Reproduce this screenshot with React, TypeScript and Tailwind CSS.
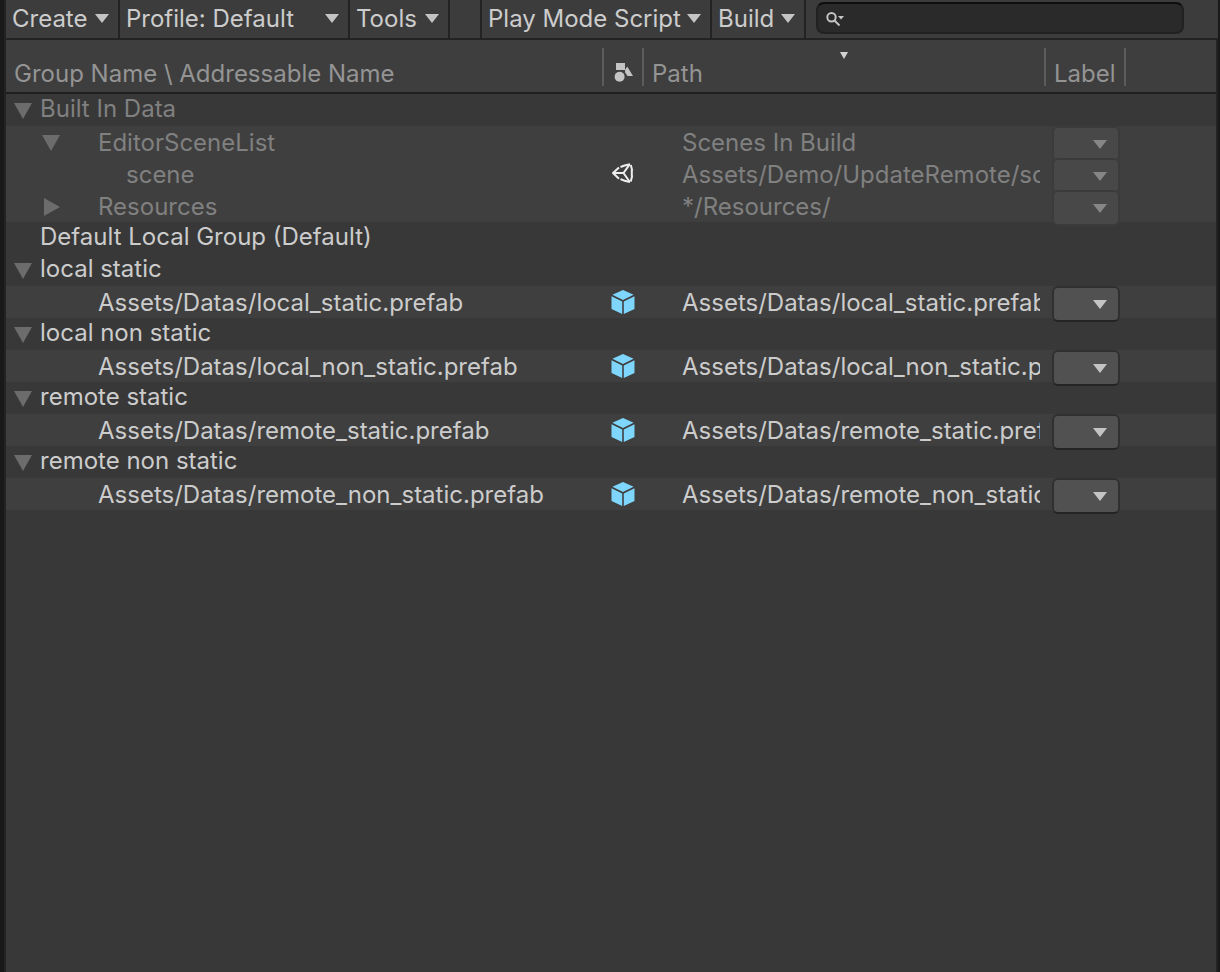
import React, { useState } from "react";

type Entry = {
  name: string;
  path: string;
  icon?: "scene" | "prefab";
  depth: number;
  fold?: "open" | "closed";
};

type Group = {
  name: string;
  readOnly?: boolean;
  entries: Entry[];
};

const groups: Group[] = [
  {
    name: "Built In Data",
    readOnly: true,
    entries: [
      { name: "EditorSceneList", path: "Scenes In Build", depth: 1, fold: "open" },
      { name: "scene", path: "Assets/Demo/UpdateRemote/scene.unity", icon: "scene", depth: 2 },
      { name: "Resources", path: "*/Resources/", depth: 1, fold: "closed" },
    ],
  },
  { name: "Default Local Group (Default)", entries: [] },
  {
    name: "local static",
    entries: [
      {
        name: "Assets/Datas/local_static.prefab",
        path: "Assets/Datas/local_static.prefab",
        icon: "prefab",
        depth: 1,
      },
    ],
  },
  {
    name: "local non static",
    entries: [
      {
        name: "Assets/Datas/local_non_static.prefab",
        path: "Assets/Datas/local_non_static.prefab",
        icon: "prefab",
        depth: 1,
      },
    ],
  },
  {
    name: "remote static",
    entries: [
      {
        name: "Assets/Datas/remote_static.prefab",
        path: "Assets/Datas/remote_static.prefab",
        icon: "prefab",
        depth: 1,
      },
    ],
  },
  {
    name: "remote non static",
    entries: [
      {
        name: "Assets/Datas/remote_non_static.prefab",
        path: "Assets/Datas/remote_non_static.prefab",
        icon: "prefab",
        depth: 1,
      },
    ],
  },
];

function Caret({ className = "" }: { className?: string }) {
  return (
    <svg
      viewBox="0 0 14 9"
      className={`h-[9px] w-[14px] shrink-0 fill-[#c4c4c4] ${className}`}
      aria-hidden="true"
    >
      <path d="M0 0h14L7 9z" />
    </svg>
  );
}

function PrefabIcon() {
  return (
    <svg viewBox="0 0 24 24" className="h-6 w-6 fill-[#7fd6fd]" aria-hidden="true">
      <path d="M12 0 L22.6 4.7 L12 10 L1.4 4.7z" />
      <path d="M0.5 6.3 L11.2 11.6 V24 L0.5 19z" />
      <path d="M23.5 6.3 L12.8 11.6 V24 L23.5 19z" />
    </svg>
  );
}

function SceneIcon() {
  return (
    <svg
      viewBox="0 0 24 24"
      className="h-6 w-6 fill-none stroke-[#eeeeee]"
      strokeWidth="2"
      aria-hidden="true"
    >
      <path d="M9.5 5 Q13 3.2 19 2.2 M19.8 3 L21.2 8.5 M21.2 13.5 L19.8 19.4 M19 20 Q13 19 9.5 17.2" />
      <path d="M20.8 8 V14" />
      <path d="M8 5.4 L2 11 L8 16.8" strokeLinejoin="round" />
      <path d="M2 11 H12.5 L18.6 2.4 M12.5 11 L18.6 19.8" />
    </svg>
  );
}

function TypeIcon() {
  return (
    <svg viewBox="0 0 20 20" className="h-5 w-5 fill-[#c4c4c4]" aria-hidden="true">
      <path d="M3 1h9v7H3z" />
      <circle cx="6.6" cy="14.8" r="5" />
      <path d="M14.2 4.5 L20 14 H14.5 L12.2 10.5 L12 8z" />
    </svg>
  );
}

function ToolbarMenu({ label, width }: { label: string; width: string }) {
  return (
    <button
      type="button"
      className={`flex h-[38px] shrink-0 justify-between border-r-2 border-[#232323] pr-[9px] pl-1.5 text-left leading-[38px] whitespace-nowrap hover:bg-[#464646] ${width}`}
    >
      {label}
      <Caret className="mt-3.5" />
    </button>
  );
}

type FoldoutProps = {
  open: boolean;
  label: string;
  onClick: () => void;
};

function Foldout({ open, label, onClick }: FoldoutProps) {
  return (
    <button
      type="button"
      aria-expanded={open}
      aria-label={label}
      onClick={onClick}
      className="flex h-8 w-[18px] shrink-0 justify-center"
    >
      <svg viewBox="0 0 18 18" className="mt-2 h-[18px] w-[18px] fill-[#6c6c6c]" aria-hidden="true">
        {open ? <path d="M0 1h18L9 17z" /> : <path d="M2 0v18L18 9z" />}
      </svg>
    </button>
  );
}

function LabelSelect({ entry, disabled }: { entry: Entry; disabled?: boolean }) {
  return (
    <div className="relative -mb-1 ml-1.5 h-9 w-[68px]">
      <select
        aria-label={`Labels for ${entry.name}`}
        disabled={disabled}
        className={`block h-9 w-full appearance-none rounded-md border-2 ${
          disabled
            ? "border-[#3b3b3b] bg-[#484848]"
            : "border-[#303030] border-b-[#242424] bg-[#515151]"
        }`}
      >
        <option value=""></option>
      </select>
      <Caret
        className={`pointer-events-none absolute top-3.5 right-[13px] ${
          disabled ? "opacity-50" : ""
        }`}
      />
    </div>
  );
}

export default function App() {
  const [closed, setClosed] = useState<string[]>(["Resources"]);
  const [search, setSearch] = useState("");

  const toggle = (name: string) => {
    setClosed(
      closed.includes(name) ? closed.filter((item) => item !== name) : [...closed, name]
    );
  };

  const visibleEntries = (group: Group) => {
    if (closed.includes(group.name)) return [];
    return group.entries.filter(
      (entry) => entry.depth === 1 || !closed.includes("EditorSceneList")
    );
  };

  return (
    <div className="flex min-h-screen border-r-2 border-l-4 border-[#191919] bg-[#383838] font-['Inter','Liberation_Sans',sans-serif] text-[24px] text-[#cccccc]">
      <div className="flex min-w-0 flex-1 flex-col border-l-2 border-[#232323]">
        <div className="flex border-b-2 border-[#232323] bg-[#3c3c3c]">
          <ToolbarMenu label="Create" width="w-[114px]" />
          <ToolbarMenu label="Profile: Default" width="w-[230px]" />
          <ToolbarMenu label="Tools" width="w-[100px]" />
          <div className="w-8 shrink-0 border-r-2 border-[#232323]"></div>
          <ToolbarMenu label="Play Mode Script" width="w-[230px]" />
          <ToolbarMenu label="Build" width="w-[94px]" />
          <label className="mt-0.5 mr-[34px] ml-2.5 flex h-8 min-w-0 flex-1 rounded-lg border-2 border-[#212121] border-t-[#0d0d0d] bg-[#2a2a2a] pl-2">
            <svg
              viewBox="0 0 20 16"
              className="mt-2 h-4 w-5 shrink-0 fill-none stroke-[#c4c4c4]"
              strokeWidth="2"
              aria-hidden="true"
            >
              <circle cx="5.5" cy="5.2" r="4.2" />
              <path d="M8.5 8.5 L13.5 13.5" />
              <path d="M12 4h6L15 7.5z" className="fill-[#c4c4c4] stroke-none" />
            </svg>
            <input
              type="text"
              aria-label="Search"
              value={search}
              onChange={(e) => setSearch(e.target.value)}
              className="min-w-0 flex-1 bg-transparent pl-1 text-[20px] outline-none"
            />
          </label>
        </div>

        <div className="flex-1 border-r-2 border-[#232323]">
          <table className="w-full table-fixed border-collapse">
            <colgroup>
              <col className="w-[598px]" />
              <col className="w-10" />
              <col className="w-[402px]" />
              <col className="w-20" />
              <col />
            </colgroup>
            <thead>
              <tr className="h-[54px] bg-[#3e3e3e] text-left align-top leading-6 text-[#949494] shadow-[inset_0_-2px_0_#1f1f1f]">
                <th className="p-0 pt-2 font-normal">
                  <div className="flex h-[38px] items-end border-r-2 border-[#5c5c5c] pl-2">
                    Group Name \ Addressable Name
                  </div>
                </th>
                <th className="p-0 pt-2 font-normal" aria-label="Asset type">
                  <div className="flex h-[38px] items-end justify-center border-r-2 border-[#5c5c5c] pb-1">
                    <TypeIcon />
                  </div>
                </th>
                <th className="p-0 pt-2 font-normal" aria-sort="descending">
                  <div className="relative flex h-[38px] items-end border-r-2 border-[#5c5c5c] pl-2">
                    Path
                    <svg
                      viewBox="0 0 8 7"
                      className="absolute top-1 left-1/2 h-[7px] w-2 -translate-x-1/2 fill-[#d2d2d2]"
                      aria-hidden="true"
                    >
                      <path d="M0 0h8L4 7z" />
                    </svg>
                  </div>
                </th>
                <th className="p-0 pt-2 font-normal">
                  <div className="flex h-[38px] items-end border-r-2 border-[#5c5c5c] pr-2 pl-2">
                    <span className="overflow-hidden">Labels</span>
                  </div>
                </th>
                <th className="p-0"></th>
              </tr>
            </thead>
            <tbody>
              {groups.map((group) => (
                <React.Fragment key={group.name}>
                  <tr className={`h-8 ${group.readOnly ? "text-[#808080]" : ""}`}>
                    <td colSpan={5} className="p-0">
                      <div className="flex h-8 pl-2">
                        {group.entries.length > 0 ? (
                          <Foldout
                            open={!closed.includes(group.name)}
                            label={group.name}
                            onClick={() => toggle(group.name)}
                          />
                        ) : (
                          <span className="w-[18px]"></span>
                        )}
                        <span className="pl-2 leading-[30px]">{group.name}</span>
                      </div>
                    </td>
                  </tr>
                  {visibleEntries(group).map((entry) => (
                    <tr
                      key={entry.name}
                      className={`h-8 bg-[#3f3f3f] leading-[34px] ${
                        group.readOnly ? "text-[#808080]" : ""
                      }`}
                    >
                      <td className="p-0">
                        <div className="flex h-8 overflow-hidden pl-9 whitespace-nowrap">
                          {entry.fold ? (
                            <Foldout
                              open={!closed.includes(entry.name)}
                              label={entry.name}
                              onClick={() => toggle(entry.name)}
                            />
                          ) : (
                            <span className="w-[18px] shrink-0"></span>
                          )}
                          <span className={entry.depth === 2 ? "pl-[66px]" : "pl-[38px]"}>
                            {entry.name}
                          </span>
                        </div>
                      </td>
                      <td className="p-0">
                        <div className="flex justify-center pr-0.5">
                          {entry.icon === "prefab" && <PrefabIcon />}
                          {entry.icon === "scene" && <SceneIcon />}
                        </div>
                      </td>
                      <td className="p-0 pr-1.5 pl-[38px]">
                        <div className="h-8 overflow-hidden whitespace-nowrap">{entry.path}</div>
                      </td>
                      <td className="p-0 align-top">
                        <LabelSelect entry={entry} disabled={group.readOnly} />
                      </td>
                      <td className="p-0"></td>
                    </tr>
                  ))}
                </React.Fragment>
              ))}
            </tbody>
          </table>
        </div>
      </div>
    </div>
  );
}
